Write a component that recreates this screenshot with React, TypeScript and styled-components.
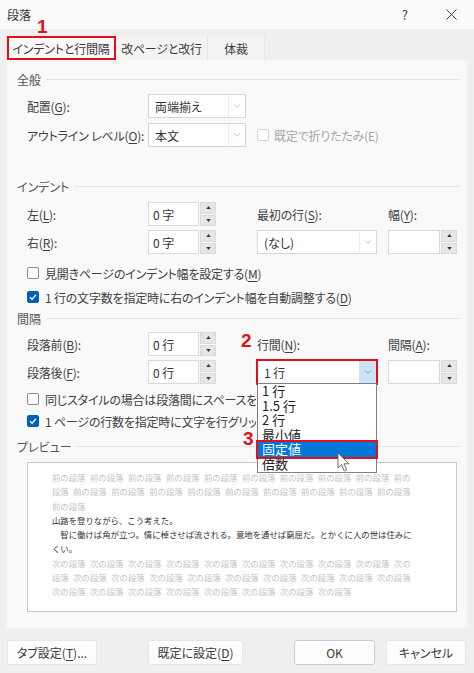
import React from "react";
import styled, { createGlobalStyle } from "styled-components";
import { ChevronDown } from "lucide-react";

const GlobalStyle = createGlobalStyle`
  html, body {
    margin: 0;
    padding: 0;
    background: #efefef;
  }
  body {
    font-family: "Noto Sans CJK JP", "Noto Sans", sans-serif;
    font-feature-settings: "palt";
    font-size: 12px;
    color: #333;
  }
  u {
    text-underline-offset: 2px;
  }
`;

const RED = "#e3101c";

const Window = styled.div`
  width: 474px;
  height: 673px;
  display: flex;
  flex-direction: column;
  background: #efefef;
  overflow: hidden;
`;

const TitleBar = styled.div`
  height: 29px;
  display: flex;
  align-items: center;
  padding: 0 17px 0 7px;
  background: #fafafa;
  color: #333;
`;

const TitleText = styled.span`
  font-size: 12px;
`;

const TitleTools = styled.div`
  margin-left: auto;
  display: flex;
  align-items: center;
  gap: 38px;
  font-size: 13px;
  color: #444;
`;

const TabStrip = styled.div`
  margin-top: 7px;
  height: 24px;
  display: flex;
  padding: 0 7px;
`;

const Tab = styled.div<{ $active?: boolean; $w: number; $marked?: boolean }>`
  position: relative;
  width: ${(p) => p.$w}px;
  box-sizing: border-box;
  display: flex;
  align-items: center;
  justify-content: center;
  background: ${(p) => (p.$active ? "#f9f9f9" : "#f3f3f3")};
  border-right: 1px solid ${(p) => (p.$active ? "transparent" : "#e6e6e6")};
  color: #3a3a3a;
  font-size: 12px;
  letter-spacing: -0.2px;
  outline: ${(p) => (p.$marked ? `2px solid ${RED}` : "none")};
  outline-offset: -2px;
`;

const Marker = styled.span<{ $left: number; $top: number }>`
  position: absolute;
  left: ${(p) => p.$left}px;
  top: ${(p) => p.$top}px;
  font-family: "Liberation Sans", Arial, sans-serif;
  font-weight: bold;
  font-size: 19px;
  line-height: 1;
  color: ${RED};
`;

const Panel = styled.div`
  margin: 0 7px;
  height: 568px;
  box-sizing: border-box;
  padding: 10px 8px 0 10px;
  background: #f9f9f9;
  display: flex;
  flex-direction: column;
`;

const SectionHead = styled.div<{ $mt?: number }>`
  height: 18px;
  margin-top: ${(p) => p.$mt ?? 0}px;
  display: flex;
  align-items: center;
  gap: 5px;
  color: #555;
  font-size: 12px;
  &::after {
    content: "";
    flex: 1;
    height: 1px;
    background: #e4e4e4;
  }
`;

const FormRow = styled.div<{ $mt: number }>`
  margin-top: ${(p) => p.$mt}px;
  margin-left: 10px;
  height: 24px;
  display: grid;
  grid-template-columns: 110px 98px 120px 69px;
  column-gap: 11px;
  align-items: center;
`;

const Label = styled.span<{ $muted?: boolean }>`
  position: relative;
  white-space: nowrap;
  font-size: 12px;
  letter-spacing: -0.2px;
  color: ${(p) => (p.$muted ? "#a6a6a6" : "#404040")};
`;

const SelectBox = styled.div<{ $w: number; $marked?: boolean }>`
  position: relative;
  width: ${(p) => p.$w}px;
  height: 24px;
  box-sizing: border-box;
  display: flex;
  background: #fff;
  border: 1px solid #d6d6d6;
  outline: ${(p) => (p.$marked ? `2px solid ${RED}` : "none")};
  outline-offset: -1px;
`;

const SelectText = styled.span`
  flex: 1;
  display: flex;
  align-items: center;
  padding-left: 6px;
  color: #333;
  font-size: 12px;
  white-space: nowrap;
`;

const SelectArrow = styled.span<{ $hot?: boolean }>`
  width: 16px;
  display: flex;
  align-items: center;
  justify-content: center;
  border-left: 1px solid ${(p) => (p.$hot ? "#cce4f7" : "#ececec")};
  background: ${(p) => (p.$hot ? "#cce4f7" : "transparent")};
  color: ${(p) => (p.$hot ? "#5a7da0" : "#a0a0a0")};
`;

const Spin = styled.div<{ $w: number }>`
  width: ${(p) => p.$w}px;
  height: 24px;
  display: flex;
  gap: 1px;
`;

const SpinInput = styled.div`
  flex: 1;
  box-sizing: border-box;
  display: flex;
  align-items: center;
  padding-left: 4px;
  background: #fff;
  border: 1px solid #dadada;
  font-size: 12px;
  color: #333;
`;

const SpinButtons = styled.div`
  width: 16px;
  display: flex;
  flex-direction: column;
  gap: 1px;
`;

const SpinButton = styled.span`
  flex: 1;
  display: flex;
  align-items: center;
  justify-content: center;
  background: #e6e6e6;
  border: 1px solid #dadada;
`;

const CheckRow = styled.div<{ $mt: number }>`
  margin-top: ${(p) => p.$mt}px;
  margin-left: 10px;
  height: 14px;
  display: flex;
  align-items: center;
  gap: 6px;
  white-space: nowrap;
  font-size: 12px;
  letter-spacing: -0.2px;
  color: #404040;
`;

/* text of a checkbox row that runs in under the open list is cut where the list starts */
const CheckText = styled.span<{ $clip?: number }>`
  overflow: hidden;
  max-width: ${(p) => (p.$clip ? `${p.$clip}px` : "none")};
`;

const Box = styled.span<{ $checked?: boolean; $muted?: boolean }>`
  width: 12px;
  height: 12px;
  flex: none;
  box-sizing: border-box;
  border-radius: 2px;
  display: flex;
  align-items: center;
  justify-content: center;
  background: ${(p) => (p.$checked ? "#005fb8" : "#fdfdfd")};
  border: 1px solid
    ${(p) => (p.$checked ? "#005fb8" : p.$muted ? "#d4d4d4" : "#8a8a8a")};
`;

const InlineCheck = styled.span`
  display: flex;
  align-items: center;
  gap: 5px;
`;

const Preview = styled.div`
  margin: 7px 0 0 10px;
  width: 430px;
  height: 150px;
  box-sizing: border-box;
  padding: 7px 0 0 24px;
  background: #fff;
  border: 1px solid #c9c9c9;
  overflow: hidden;
`;

const PreviewPara = styled.p<{ $ghost?: boolean }>`
  margin: 0;
  width: 364px;
  font-size: 8.4px;
  line-height: 14.3px;
  font-feature-settings: normal;
  word-spacing: 2.6px;
  color: ${(p) => (p.$ghost ? "#c4c4c4" : "#333")};
`;

const Dropdown = styled.ul`
  position: absolute;
  left: -1px;
  top: 100%;
  width: 120px;
  margin: 0;
  padding: 0;
  list-style: none;
  box-sizing: border-box;
  background: #fff;
  border: 1px solid #7f7f7f;
  z-index: 2;
`;

const Option = styled.li<{ $selected?: boolean }>`
  position: relative;
  height: 14.6px;
  line-height: 14.6px;
  padding-left: 4px;
  font-size: 13px;
  white-space: nowrap;
  color: ${(p) => (p.$selected ? "#fff" : "#222")};
  background: ${(p) => (p.$selected ? "#0078d7" : "transparent")};
  outline: ${(p) => (p.$selected ? `2px solid ${RED}` : "none")};
  outline-offset: 0px;
`;

const Cursor = styled.svg`
  position: absolute;
  left: 79px;
  top: 68px;
`;

const Footer = styled.div`
  margin-top: 12px;
  padding: 0 8px 0 7px;
  display: flex;
`;

const ButtonGroup = styled.div<{ $gap: number; $right?: boolean }>`
  display: flex;
  gap: ${(p) => p.$gap}px;
  margin-left: ${(p) => (p.$right ? "auto" : "0")};
`;

const Button = styled.button<{ $w: number; $primary?: boolean }>`
  width: ${(p) => p.$w}px;
  height: 25px;
  padding: 0;
  border-radius: 3px;
  border: 1px solid ${(p) => (p.$primary ? "#c3cde0" : "#e6e6e6")};
  background: #fdfdfd;
  font-family: inherit;
  font-feature-settings: "palt";
  font-size: 12px;
  color: #3a3a3a;
`;

const Chevron = ({ hot }: { hot?: boolean }) => (
  <SelectArrow $hot={hot}>
    <ChevronDown size={10} strokeWidth={1.6} />
  </SelectArrow>
);

const Triangle = ({ up }: { up?: boolean }) => (
  <svg width="5" height="3" viewBox="0 0 6 4">
    <path d={up ? "M0 4 L3 0 L6 4 Z" : "M0 0 L3 4 L6 0 Z"} fill="#333" />
  </svg>
);

const SpinField = ({ value, w }: { value: string; w: number }) => (
  <Spin $w={w}>
    <SpinInput>{value}</SpinInput>
    <SpinButtons>
      <SpinButton>
        <Triangle up />
      </SpinButton>
      <SpinButton>
        <Triangle />
      </SpinButton>
    </SpinButtons>
  </Spin>
);

const Check = ({ checked, muted }: { checked?: boolean; muted?: boolean }) => (
  <Box $checked={checked} $muted={muted}>
    {checked && (
      <svg width="8" height="8" viewBox="0 0 8 8">
        <polyline
          points="1,4.2 3.1,6.2 7,1.8"
          fill="none"
          stroke="#fff"
          strokeWidth="1.3"
        />
      </svg>
    )}
  </Box>
);

const lineOptions = ["1 行", "1.5 行", "2 行", "最小値", "固定値", "倍数"];

const repeat = (word: string, n: number) => Array(n).fill(word).join(" ");

const bodyText =
  "\u3000智に働けば角が立つ。情に棹させば流される。意地を通せば窮屈だ。とかくに人の世は住みにくい。";

export default function App() {
  return (
    <>
      <GlobalStyle />
      <Window>
        <TitleBar>
          <TitleText>段落</TitleText>
          <TitleTools>
            <span>?</span>
            <svg width="11" height="11" viewBox="0 0 11 11">
              <path d="M0.5 0.5 L10.5 10.5 M10.5 0.5 L0.5 10.5" stroke="#444" strokeWidth="1" />
            </svg>
          </TitleTools>
        </TitleBar>

        <TabStrip>
          <Tab $active $marked $w={109}>
            インデントと行間隔
            <Marker $left={30} $top={-19}>1</Marker>
          </Tab>
          <Tab $w={92}>改ページと改行</Tab>
          <Tab $w={57}>体裁</Tab>
        </TabStrip>

        <Panel>
          <SectionHead>全般</SectionHead>
          <FormRow $mt={6}>
            <Label>
              配置(<u>G</u>):
            </Label>
            <SelectBox $w={98}>
              <SelectText>両端揃え</SelectText>
              <Chevron />
            </SelectBox>
          </FormRow>
          <FormRow $mt={5}>
            <Label>
              アウトライン レベル(<u>O</u>):
            </Label>
            <SelectBox $w={98}>
              <SelectText>本文</SelectText>
              <Chevron />
            </SelectBox>
            <InlineCheck>
              <Check muted />
              <Label $muted>既定で折りたたみ(E)</Label>
            </InlineCheck>
          </FormRow>

          <SectionHead $mt={30}>インデント</SectionHead>
          <FormRow $mt={7}>
            <Label>
              左(<u>L</u>):
            </Label>
            <SpinField value="0 字" w={68} />
            <Label>
              最初の行(<u>S</u>):
            </Label>
            <Label>
              幅(<u>Y</u>):
            </Label>
          </FormRow>
          <FormRow $mt={4}>
            <Label>
              右(<u>R</u>):
            </Label>
            <SpinField value="0 字" w={68} />
            <SelectBox $w={120}>
              <SelectText>(なし)</SelectText>
              <Chevron />
            </SelectBox>
            <SpinField value="" w={69} />
          </FormRow>
          <CheckRow $mt={12}>
            <Check />
            <CheckText>
              見開きページのインデント幅を設定する(<u>M</u>)
            </CheckText>
          </CheckRow>
          <CheckRow $mt={10}>
            <Check checked />
            <CheckText>
              1 行の文字数を指定時に右のインデント幅を自動調整する(<u>D</u>)
            </CheckText>
          </CheckRow>

          <SectionHead $mt={5}>間隔</SectionHead>
          <FormRow $mt={5}>
            <Label>
              段落前(<u>B</u>):
            </Label>
            <SpinField value="0 行" w={68} />
            <Label>
              行間(<u>N</u>):
              <Marker $left={-16} $top={-5}>2</Marker>
            </Label>
            <Label>
              間隔(<u>A</u>):
            </Label>
          </FormRow>
          <FormRow $mt={4}>
            <Label>
              段落後(<u>F</u>):
            </Label>
            <SpinField value="0 行" w={68} />
            <SelectBox $w={120} $marked>
              <SelectText>1 行</SelectText>
              <Chevron hot />
              <Dropdown>
                {lineOptions.map((opt) => (
                  <Option key={opt} $selected={opt === "固定値"}>
                    {opt}
                  </Option>
                ))}
                <Marker $left={-15} $top={45}>3</Marker>
                <Cursor width="15" height="21" viewBox="0 0 15 21">
                  <path
                    d="M1 1 L1 16 L4.6 12.6 L7.2 18.8 L9.6 17.8 L7 11.8 L12 11.8 Z"
                    fill="#fff"
                    stroke="#6a6a6a"
                    strokeWidth="1"
                    strokeLinejoin="round"
                  />
                </Cursor>
              </Dropdown>
            </SelectBox>
            <SpinField value="" w={69} />
          </FormRow>
          <CheckRow $mt={8}>
            <Check />
            <CheckText $clip={211}>
              同じスタイルの場合は段落間にスペースを追加しない(C)
            </CheckText>
          </CheckRow>
          <CheckRow $mt={8}>
            <Check checked />
            <CheckText $clip={211}>
              1 ページの行数を指定時に文字を行グリッド線に合わせる(W)
            </CheckText>
          </CheckRow>

          <SectionHead $mt={9}>プレビュー</SectionHead>
          <Preview>
            <PreviewPara $ghost>{repeat("前の段落", 20)}</PreviewPara>
            <PreviewPara>山路を登りながら、こう考えた。</PreviewPara>
            <PreviewPara>{bodyText}</PreviewPara>
            <PreviewPara $ghost>{repeat("次の段落", 27)}</PreviewPara>
          </Preview>
        </Panel>

        <Footer>
          <ButtonGroup $gap={51}>
            <Button $w={90}>
              タブ設定(<u>T</u>)...
            </Button>
            <Button $w={95}>
              既定に設定(<u>D</u>)
            </Button>
          </ButtonGroup>
          <ButtonGroup $gap={11} $right>
            <Button $w={81} $primary>
              OK
            </Button>
            <Button $w={80}>キャンセル</Button>
          </ButtonGroup>
        </Footer>
      </Window>
    </>
  );
}
